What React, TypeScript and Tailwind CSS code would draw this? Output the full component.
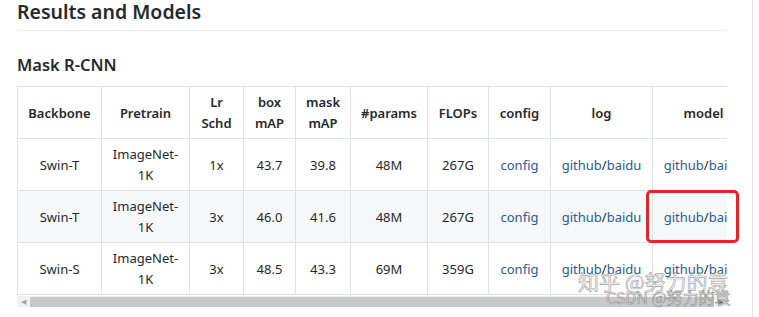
const headers: string[][] = [
  ["Backbone"],
  ["Pretrain"],
  ["Lr", "Schd"],
  ["box", "mAP"],
  ["mask", "mAP"],
  ["#params"],
  ["FLOPs"],
  ["config"],
  ["log"],
  ["model"],
];

const widths = [84, 88, 54, 52, 55, 77, 61, 62, 102, 102];

const rows = [
  { backbone: "Swin-T", lr: "1x", box: "43.7", mask: "39.8", params: "48M", flops: "267G" },
  { backbone: "Swin-T", lr: "3x", box: "46.0", mask: "41.6", params: "48M", flops: "267G" },
  { backbone: "Swin-S", lr: "3x", box: "48.5", mask: "43.3", params: "69M", flops: "359G" },
];

const cell = "border border-[#dfe2e5] px-[6px] pt-[5px] pb-[4px] leading-[21px] text-center align-middle";
const link = "text-[#2b5c93]";

export default function App() {
  return (
    <div className="relative h-[317px] w-[759px] overflow-hidden bg-white font-['Noto_Sans',sans-serif] text-[#24292e]">
      <div className="absolute right-[6px] top-0 h-full w-px bg-[#e4e4e4]" />
      <div className="w-[710px] ml-[17px]">
        <h2 className="-mt-[4px] border-b border-[#eaecef] pb-[2px] text-[19.5px] font-semibold leading-[32px]">
          Results and Models
        </h2>
        <h3 className="mt-[22px] text-[16.5px] font-semibold leading-[24px]">Mask R-CNN</h3>
        <div className="mt-[9px] overflow-hidden">
          <table className="table-fixed border-collapse text-[13px]" style={{ width: 737 }}>
            <colgroup>
              {widths.map((w, i) => (
                <col key={i} style={{ width: w }} />
              ))}
            </colgroup>
            <thead>
              <tr className="bg-white">
                {headers.map((h, i) => (
                  <th key={i} className={`${cell} font-semibold`}>
                    {h.map((line, j) => (
                      <div key={j}>{line}</div>
                    ))}
                  </th>
                ))}
              </tr>
            </thead>
            <tbody>
              {rows.map((r, i) => (
                <tr key={i} className={i === 1 ? "bg-[#f6f8fa]" : "bg-white"}>
                  <td className={cell}>{r.backbone}</td>
                  <td className={cell}>
                    <div>ImageNet-</div>
                    <div>1K</div>
                  </td>
                  <td className={cell}>{r.lr}</td>
                  <td className={cell}>{r.box}</td>
                  <td className={cell}>{r.mask}</td>
                  <td className={cell}>{r.params}</td>
                  <td className={cell}>{r.flops}</td>
                  <td className={cell}>
                    <span className={link}>config</span>
                  </td>
                  <td className={cell}>
                    <span className={link}>github</span>/<span className={link}>baidu</span>
                  </td>
                  <td className={cell}>
                    <span className={link}>github</span>/<span className={link}>baidu</span>
                  </td>
                </tr>
              ))}
            </tbody>
          </table>
        </div>
        <div className="mt-[1px] flex h-[11px] items-center bg-[#f1f1f1]">
          <span className="flex w-[13px] justify-center text-[7px] leading-none text-[#a3a3a3]">◀</span>
          <div className="h-[10px] w-[684px] bg-[#c8c8c8]" />
          <span className="flex w-[13px] justify-center text-[7px] leading-none text-[#505050]">▶</span>
        </div>
      </div>

      <div className="absolute left-[646px] top-[190px] h-[53px] w-[93px] rounded-[5px] border-[3px] border-[#e3262a]" />

      <div className="pointer-events-none absolute left-[578px] top-[268px] font-['Noto_Sans_CJK_SC',sans-serif] text-[21px] leading-[26px] text-white/40 [-webkit-text-stroke:0.7px_#a8a8a8]">
        知乎 @努力的袁
      </div>
      <div className="pointer-events-none absolute left-[606px] top-[287px] font-['Noto_Sans_CJK_SC',sans-serif] text-[16px] leading-[20px] text-white/40 [-webkit-text-stroke:0.6px_#909090]">
        CSDN @努力的袁
      </div>
    </div>
  );
}
